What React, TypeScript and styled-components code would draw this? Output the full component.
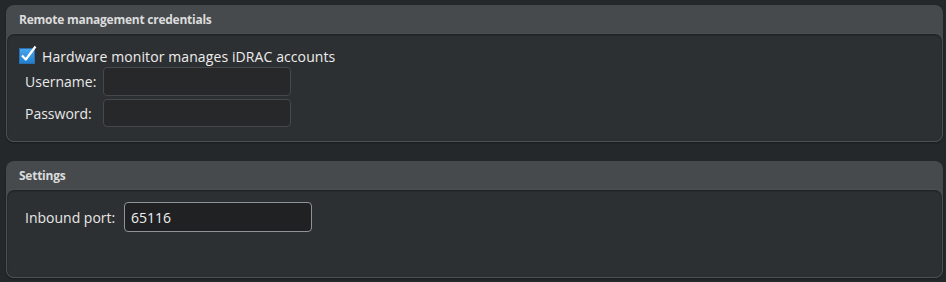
import React from "react";
import styled, { createGlobalStyle } from "styled-components";

const GlobalStyle = createGlobalStyle`
  html, body {
    margin: 0;
    padding: 0;
    background: #25282a;
  }
  body {
    font-family: "Open Sans", "Noto Sans", "Liberation Sans", sans-serif;
    color: #e6e6e6;
  }
`;

const Page = styled.div`
  display: flex;
  flex-direction: column;
  gap: 19px;
  padding: 5px 3px 0 6px;
  width: 946px;
  height: 282px;
  box-sizing: border-box;
`;

const Group = styled.section<{ $bodyHeight: number }>`
  display: flex;
  flex-direction: column;
  background: #464a4d;
  border-radius: 8px;
  padding: 0 1px 1px 1px;
  box-shadow: 0 1px 2px rgba(0, 0, 0, 0.35);

  & > div:last-child {
    height: ${(p) => p.$bodyHeight}px;
  }
`;

const GroupHeader = styled.div`
  height: 28px;
  display: flex;
  align-items: center;
  padding-left: 12px;
  font-size: 12px;
  font-weight: 700;
  color: #dcdcdc;
  letter-spacing: -0.25px;
`;

const GroupBody = styled.div`
  box-sizing: border-box;
  background: #2d3032;
  border: 1px solid #4b5053;
  border-radius: 8px;
  box-shadow: inset 0 1px 2px rgba(0, 0, 0, 0.4);
  margin: 0 -1px -1px -1px;
  padding: 12px 12px;
  display: flex;
  flex-direction: column;
`;

const CheckRow = styled.label`
  display: flex;
  align-items: center;
  gap: 7px;
  font-size: 14px;
  color: #ededed;
  height: 18px;
  margin-top: 1px;
  letter-spacing: 0.1px;
`;

const Box = styled.span`
  width: 16px;
  height: 16px;
  position: relative;
  display: inline-block;
  flex: none;
`;

const FieldGrid = styled.div<{ $labelWidth: number; $top?: number }>`
  display: grid;
  grid-template-columns: ${(p) => p.$labelWidth}px 188px;
  row-gap: 3px;
  align-items: center;
  padding-left: 6px;
  margin-top: ${(p) => p.$top ?? 0}px;
`;

const FieldLabel = styled.span`
  font-size: 14px;
  color: #e8e8e8;
`;

const TextInput = styled.input<{ $focused?: boolean; $h: number }>`
  box-sizing: border-box;
  height: ${(p) => p.$h}px;
  width: 188px;
  border-radius: 4px;
  border: 1px solid ${(p) => (p.$focused ? "#8f9296" : "#45494c")};
  background: ${(p) => (p.$focused ? "#1f2123" : "#262829")};
  color: #f0f0f0;
  font-family: inherit;
  font-size: 14px;
  padding: 0 6px;
  outline: none;
`;

const Check = () => (
  <Box>
    <svg width="18" height="19" viewBox="0 0 18 19" style={{ position: "absolute", left: 0, top: -3 }}>
      <defs>
        <linearGradient id="cb" x1="0" y1="0" x2="0" y2="1">
          <stop offset="0" stopColor="#4aa8ec" />
          <stop offset="1" stopColor="#1f7fd0" />
        </linearGradient>
      </defs>
      <rect x="0.5" y="3.5" width="15" height="15" fill="url(#cb)" stroke="#2b6fb0" />
      <path d="M3 10.5 L6.8 14.5 L16.5 1.5" fill="none" stroke="#ffffff" strokeWidth="2.2" strokeLinejoin="round" />
    </svg>
  </Box>
);

export default function App() {
  return (
    <>
      <GlobalStyle />
      <Page>
        <Group $bodyHeight={109}>
          <GroupHeader>Remote management credentials</GroupHeader>
          <GroupBody>
            <CheckRow>
              <Check />
              Hardware monitor manages iDRAC accounts
            </CheckRow>
            <FieldGrid $labelWidth={78} $top={2}>
              <FieldLabel>Username:</FieldLabel>
              <TextInput $h={29} defaultValue="" />
              <FieldLabel>Password:</FieldLabel>
              <TextInput $h={28} type="password" defaultValue="" />
            </FieldGrid>
          </GroupBody>
        </Group>
        <Group $bodyHeight={89}>
          <GroupHeader>Settings</GroupHeader>
          <GroupBody>
            <FieldGrid $labelWidth={99}>
              <FieldLabel>Inbound port:</FieldLabel>
              <TextInput $h={30} $focused defaultValue="65116" />
            </FieldGrid>
          </GroupBody>
        </Group>
      </Page>
    </>
  );
}
